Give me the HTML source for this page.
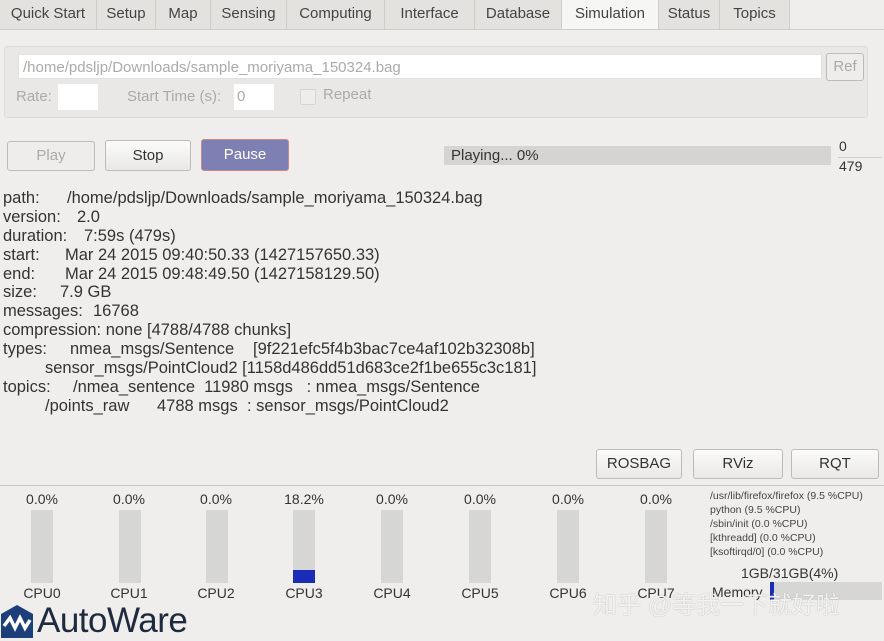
<!DOCTYPE html><html><head><style>
body{margin:0;width:884px;height:639px;background:#efeeec;font-family:"Liberation Sans","Noto Sans CJK SC",sans-serif;position:relative;overflow:hidden;color:#333}
.a{position:absolute;white-space:nowrap}
.tab{position:absolute;top:0;height:29px;background:#e3e2df;border-right:1px solid #cfcdca;border-bottom:1px solid #cfcdca;font-size:15px;line-height:28px;text-align:center;color:#444}
.btn{position:absolute;border:1px solid #bdbbb7;border-radius:3px;background:linear-gradient(#fbfbfa,#e9e8e6);font-size:15px;text-align:center;color:#333}
.bar{position:absolute;top:510px;width:22px;height:73px;background:#d6d6d4}
.cl{position:absolute;top:491px;font-size:14px;width:60px;text-align:center}
.cn{position:absolute;top:585px;font-size:14px;width:60px;text-align:center}
.info div{height:18.9px;position:relative}
.info span{position:absolute}
</style></head><body>
<div class="tab" style="left:0;width:96px">Quick Start</div>
<div class="tab" style="left:97px;width:58px">Setup</div>
<div class="tab" style="left:156px;width:54px">Map</div>
<div class="tab" style="left:211px;width:75px">Sensing</div>
<div class="tab" style="left:287px;width:97px">Computing</div>
<div class="tab" style="left:385px;width:89px">Interface</div>
<div class="tab" style="left:475px;width:86px">Database</div>
<div class="tab" style="left:562px;width:96px;background:#f6f6f5;border-bottom:none;height:30px">Simulation</div>
<div class="tab" style="left:659px;width:60px">Status</div>
<div class="tab" style="left:720px;width:69px">Topics</div>
<div class="a" style="left:0;top:29px;width:884px;height:1px;background:#cfcdca"></div>
<div class="a" style="left:4px;top:46px;width:862px;height:70px;border:1px solid #dcdbd8;border-radius:3px;background:#e9e8e6"></div>
<div class="a" style="left:18px;top:54px;width:804px;height:25px;background:#fff;border:1px solid #e2e1de;font-size:15px;line-height:25px;color:#aaa;padding-left:4px;box-sizing:border-box">/home/pdsljp/Downloads/sample_moriyama_150324.bag</div>
<div class="btn" style="left:826px;top:53px;width:36px;height:26px;line-height:26px;color:#aaa;background:#eeedeb">Ref</div>
<div class="a" style="left:16px;top:88px;font-size:15px;color:#aaa">Rate:</div>
<div class="a" style="left:58px;top:84px;width:40px;height:26px;background:#fff"></div>
<div class="a" style="left:127px;top:88px;font-size:15px;color:#aaa">Start Time (s):</div>
<div class="a" style="left:234px;top:84px;width:40px;height:26px;background:#fff;font-size:15px;color:#aaa;line-height:26px;padding-left:3px;box-sizing:border-box">0</div>
<div class="a" style="left:300px;top:89px;width:14px;height:14px;border:1px solid #d5d4d1;border-radius:2px;background:#eeedeb"></div>
<div class="a" style="left:323px;top:86px;font-size:15px;color:#aaa">Repeat</div>
<div class="btn" style="left:7px;top:141px;width:86px;height:28px;line-height:28px;color:#aaa;background:#eeedeb">Play</div>
<div class="btn" style="left:105px;top:140px;width:84px;height:29px;line-height:29px">Stop</div>
<div class="btn" style="left:201px;top:139px;width:86px;height:30px;line-height:30px;background:#7e7fb2;border-color:#c88;color:#fff">Pause</div>
<div class="a" style="left:444px;top:146px;width:387px;height:19px;background:#d5d4d2;font-size:15px;line-height:19px;padding-left:7px;box-sizing:border-box">Playing... 0%</div>
<div class="a" style="left:839px;top:138px;font-size:14px">0</div>
<div class="a" style="left:838px;top:157px;width:44px;height:1px;background:#ccc"></div>
<div class="a" style="left:839px;top:158px;font-size:14px">479</div>
<div class="a info" style="left:3px;top:189px;width:600px;font-size:16.5px;line-height:19px">
<div>path:<span style="left:64px">/home/pdsljp/Downloads/sample_moriyama_150324.bag</span></div>
<div>version:<span style="left:74px">2.0</span></div>
<div>duration:<span style="left:81px">7:59s (479s)</span></div>
<div>start:<span style="left:62px">Mar 24 2015 09:40:50.33 (1427157650.33)</span></div>
<div>end:<span style="left:62px">Mar 24 2015 09:48:49.50 (1427158129.50)</span></div>
<div>size:<span style="left:57px">7.9 GB</span></div>
<div>messages:<span style="left:90px">16768</span></div>
<div>compression: none [4788/4788 chunks]</div>
<div>types:<span style="left:67px">nmea_msgs/Sentence</span><span style="left:250px">[9f221efc5f4b3bac7ce4af102b32308b]</span></div>
<div><span style="left:42px">sensor_msgs/PointCloud2 [1158d486dd51d683ce2f1be655c3c181]</span></div>
<div>topics:<span style="left:70px">/nmea_sentence &nbsp;11980 msgs &nbsp;&nbsp;: nmea_msgs/Sentence</span></div>
<div><span style="left:42px">/points_raw</span><span style="left:154px">4788 msgs</span><span style="left:244px">: sensor_msgs/PointCloud2</span></div>
</div>
<div class="btn" style="left:596px;top:449px;width:84px;height:28px;line-height:28px">ROSBAG</div>
<div class="btn" style="left:693px;top:449px;width:88px;height:28px;line-height:28px">RViz</div>
<div class="btn" style="left:791px;top:449px;width:86px;height:28px;line-height:28px">RQT</div>
<div class="a" style="left:0;top:485px;width:884px;height:1px;background:#c9c8c5"></div>
<div class="cl" style="left:12px">0.0%</div><div class="bar" style="left:31px"></div><div class="cn" style="left:12px">CPU0</div>
<div class="cl" style="left:99px">0.0%</div><div class="bar" style="left:119px"></div><div class="cn" style="left:99px">CPU1</div>
<div class="cl" style="left:186px">0.0%</div><div class="bar" style="left:206px"></div><div class="cn" style="left:186px">CPU2</div>
<div class="cl" style="left:274px">18.2%</div><div class="bar" style="left:293px"><div style="position:absolute;bottom:0;width:22px;height:13px;background:#1b2db8"></div></div><div class="cn" style="left:274px">CPU3</div>
<div class="cl" style="left:362px">0.0%</div><div class="bar" style="left:381px"></div><div class="cn" style="left:362px">CPU4</div>
<div class="cl" style="left:450px">0.0%</div><div class="bar" style="left:469px"></div><div class="cn" style="left:450px">CPU5</div>
<div class="cl" style="left:538px">0.0%</div><div class="bar" style="left:557px"></div><div class="cn" style="left:538px">CPU6</div>
<div class="cl" style="left:626px">0.0%</div><div class="bar" style="left:645px"></div><div class="cn" style="left:626px">CPU7</div>
<div class="a" style="left:710px;top:489px;font-size:10.5px;line-height:14px;color:#444">/usr/lib/firefox/firefox (9.5 %CPU)<br>python (9.5 %CPU)<br>/sbin/init (0.0 %CPU)<br>[kthreadd] (0.0 %CPU)<br>[ksoftirqd/0] (0.0 %CPU)</div>
<div class="a" style="left:741px;top:565px;font-size:14px">1GB/31GB(4%)</div>
<div class="a" style="left:712px;top:584px;font-size:14px">Memory</div>
<div class="a" style="left:770px;top:582px;width:112px;height:18px;background:#d6d6d4"><div style="width:4px;height:18px;background:#1b2db8"></div></div>
<div class="a" style="left:593px;top:585px;font-size:24px;color:rgba(255,255,255,.85);text-shadow:0 0 1px #999">知乎 @等我一下就好啦</div>
<svg class="a" style="left:0;top:604px" width="34" height="35" viewBox="0 0 34 35"><polygon points="17,1 33,10 33,34 1,34 1,10" fill="#1c3f7a"/><path d="M4,22 L10,14 L15,24 L20,14 L25,24 L30,16" stroke="#fff" stroke-width="3.5" fill="none"/></svg>
<div class="a" style="left:37px;top:601px;font-size:35px;color:#1e2a3e;letter-spacing:-0.5px">AutoWare</div>
</body></html>
